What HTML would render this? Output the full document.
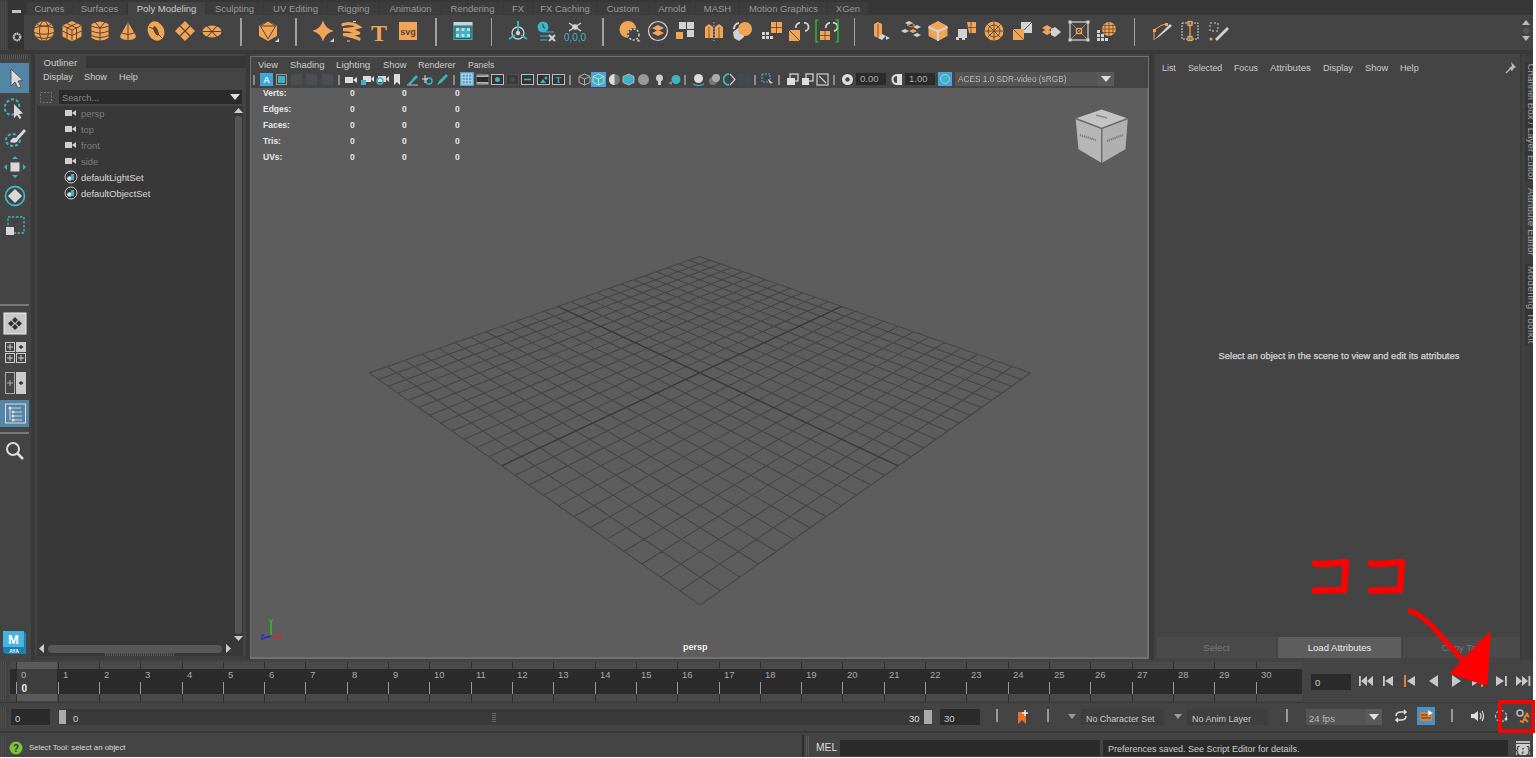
<!DOCTYPE html><html><head><meta charset="utf-8"><style>
html,body{margin:0;padding:0;background:#fff;}
#app{position:absolute;left:0;top:0;width:1533px;height:757px;background:#444;overflow:hidden;font-family:"Liberation Sans",sans-serif;}
#app div,#app span,#app svg{position:absolute;}
.t{white-space:pre;line-height:12px;}
</style></head><body><div id="app">
<div style="left:0px;top:0px;width:1533px;height:15px;background:#373737;"></div>
<div style="left:0px;top:0px;width:8px;height:51px;background:#414141;"></div>
<div style="left:8px;top:0px;width:16px;height:51px;background:#353535;"></div>
<div style="left:24px;top:15px;width:1509px;height:36px;background:#444;"></div>
<div style="left:0px;top:50px;width:1533px;height:4px;background:#393939;"></div>
<div style="left:27px;top:2px;width:45px;height:13px;background:#3d3d3d;"></div>
<span class="t" style="left:27px;top:3px;width:45px;text-align:center;color:#999;font-size:9.5px;">Curves</span>
<div style="left:73px;top:2px;width:53px;height:13px;background:#3d3d3d;"></div>
<span class="t" style="left:73px;top:3px;width:53px;text-align:center;color:#999;font-size:9.5px;">Surfaces</span>
<div style="left:128px;top:2px;width:77px;height:13px;background:#444;"></div>
<span class="t" style="left:128px;top:3px;width:77px;text-align:center;color:#ccc;font-size:9.5px;">Poly Modeling</span>
<div style="left:206px;top:2px;width:57px;height:13px;background:#3d3d3d;"></div>
<span class="t" style="left:206px;top:3px;width:57px;text-align:center;color:#999;font-size:9.5px;">Sculpting</span>
<div style="left:264px;top:2px;width:63px;height:13px;background:#3d3d3d;"></div>
<span class="t" style="left:264px;top:3px;width:63px;text-align:center;color:#999;font-size:9.5px;">UV Editing</span>
<div style="left:328px;top:2px;width:51px;height:13px;background:#3d3d3d;"></div>
<span class="t" style="left:328px;top:3px;width:51px;text-align:center;color:#999;font-size:9.5px;">Rigging</span>
<div style="left:380px;top:2px;width:61px;height:13px;background:#3d3d3d;"></div>
<span class="t" style="left:380px;top:3px;width:61px;text-align:center;color:#999;font-size:9.5px;">Animation</span>
<div style="left:442px;top:2px;width:61px;height:13px;background:#3d3d3d;"></div>
<span class="t" style="left:442px;top:3px;width:61px;text-align:center;color:#999;font-size:9.5px;">Rendering</span>
<div style="left:504px;top:2px;width:28px;height:13px;background:#3d3d3d;"></div>
<span class="t" style="left:504px;top:3px;width:28px;text-align:center;color:#999;font-size:9.5px;">FX</span>
<div style="left:533px;top:2px;width:64px;height:13px;background:#3d3d3d;"></div>
<span class="t" style="left:533px;top:3px;width:64px;text-align:center;color:#999;font-size:9.5px;">FX Caching</span>
<div style="left:598px;top:2px;width:50px;height:13px;background:#3d3d3d;"></div>
<span class="t" style="left:598px;top:3px;width:50px;text-align:center;color:#999;font-size:9.5px;">Custom</span>
<div style="left:649px;top:2px;width:46px;height:13px;background:#3d3d3d;"></div>
<span class="t" style="left:649px;top:3px;width:46px;text-align:center;color:#999;font-size:9.5px;">Arnold</span>
<div style="left:696px;top:2px;width:43px;height:13px;background:#3d3d3d;"></div>
<span class="t" style="left:696px;top:3px;width:43px;text-align:center;color:#999;font-size:9.5px;">MASH</span>
<div style="left:740px;top:2px;width:87px;height:13px;background:#3d3d3d;"></div>
<span class="t" style="left:740px;top:3px;width:87px;text-align:center;color:#999;font-size:9.5px;">Motion Graphics</span>
<div style="left:828px;top:2px;width:40px;height:13px;background:#3d3d3d;"></div>
<span class="t" style="left:828px;top:3px;width:40px;text-align:center;color:#999;font-size:9.5px;">XGen</span>
<svg style="left:32.0px;top:19.0px" width="24" height="24" viewBox="0 0 24 24"><circle cx="12" cy="12" r="10" fill="#f0a458"/><g stroke="#5b432e" stroke-width="1" fill="none"><ellipse cx="12" cy="12" rx="4.5" ry="10"/><path d="M2.5 9 Q12 5 21.5 9M2 13.5 Q12 17 22 13.5M4 18 Q12 21 20 18M5 5.5 Q12 9 19 5.5"/></g></svg>
<svg style="left:60.0px;top:19.0px" width="24" height="24" viewBox="0 0 24 24"><path d="M12 2 L21.5 6.5 L21.5 17.5 L12 22.5 L2.5 17.5 L2.5 6.5Z" fill="#f0a458"/><g stroke="#5b432e" stroke-width="1" fill="none"><path d="M2.5 6.5 L12 11 L21.5 6.5M12 11 L12 22.5M7 4.5 L16.5 9M16.5 4.5 L7 9M2.5 12 L12 16.5 L21.5 12M7 9 L7 20M16.5 9 L16.5 20"/></g></svg>
<svg style="left:88.0px;top:19.0px" width="24" height="24" viewBox="0 0 24 24"><path d="M3.5 5 Q12 0 20.5 5 L20.5 19 Q12 24 3.5 19Z" fill="#f0a458"/><g stroke="#5b432e" stroke-width="1" fill="none"><path d="M3.5 7 Q12 11 20.5 7M3.5 12 Q12 16 20.5 12M3.5 16.5 Q12 20.5 20.5 16.5M12 9 L12 22M7 3 L12 9 L17 3"/></g></svg>
<svg style="left:116.0px;top:19.0px" width="24" height="24" viewBox="0 0 24 24"><path d="M12 3 L20 17 Q20 21 12 21 Q4 21 4 17Z" fill="#f0a458"/><g stroke="#5b432e" stroke-width="1" fill="none"><path d="M12 3 L12 21M6 14 Q12 17 18 14"/></g></svg>
<svg style="left:144.0px;top:19.0px" width="24" height="24" viewBox="0 0 24 24"><ellipse cx="12" cy="12" rx="8" ry="10" fill="#f0a458" transform="rotate(-25 12 12)"/><ellipse cx="12" cy="12" rx="2" ry="5" fill="#5b432e" transform="rotate(-25 12 12)"/><path d="M5 8 L10 10M14 15 L18 19" stroke="#5b432e" stroke-width="1"/></svg>
<svg style="left:173.0px;top:19.0px" width="24" height="24" viewBox="0 0 24 24"><path d="M12 2 L22 12 L12 22 L2 12Z" fill="#f0a458"/><path d="M7 7 L17 17M17 7 L7 17" stroke="#5b432e" stroke-width="1.2"/></svg>
<svg style="left:200.0px;top:19.0px" width="24" height="24" viewBox="0 0 24 24"><ellipse cx="12" cy="12.5" rx="9.5" ry="6" fill="#f0a458"/><path d="M2.5 12.5 L21.5 12.5M7 7 L17 18M17 7 L7 18" stroke="#5b432e" stroke-width="1.1"/></svg>
<svg style="left:256.0px;top:19.0px" width="24" height="24" viewBox="0 0 24 24"><path d="M12 2 L21 7 L21 17 L12 22 L3 17 L3 7Z" fill="#f0a458"/><path d="M4.5 7 L19.5 7 L12 20Z M12 2 L4.5 7 M12 2 L19.5 7" stroke="#5b432e" stroke-width="1" fill="none"/><path d="M23 19 L23 23 L19 23Z" fill="#d2d2d2"/></svg>
<svg style="left:311.0px;top:19.0px" width="24" height="24" viewBox="0 0 24 24"><path d="M12 1.5 Q14.3 9.7 22.5 12 Q14.3 14.3 12 22.5 Q9.7 14.3 1.5 12 Q9.7 9.7 12 1.5Z" fill="#f0a458"/><path d="M23 19 L23 23 L19 23Z" fill="#d2d2d2"/></svg>
<svg style="left:339.0px;top:19.0px" width="24" height="24" viewBox="0 0 24 24"><g stroke="#f0a458" stroke-width="3.2" fill="none" stroke-linecap="round" stroke-dasharray="4 1"><path d="M4 5.5 Q13 3 20 8 Q12 10.5 4 10.5 Q13 11 20 14 Q12 16 4 15.5 Q13 17 20 20"/></g><path d="M14 2.5 L17 2.5 M8 22 L11 22" stroke="#d2d2d2" stroke-width="1.2"/></svg>
<svg style="left:367.0px;top:19.0px" width="24" height="24" viewBox="0 0 24 24"><text x="12" y="21.5" text-anchor="middle" font-family="Liberation Serif" font-weight="bold" font-size="24" fill="#f0a458">T</text></svg>
<svg style="left:395.5px;top:19.0px" width="24" height="24" viewBox="0 0 24 24"><rect x="3" y="3" width="18" height="18" fill="#f0a458"/><text x="12" y="15.5" text-anchor="middle" font-family="Liberation Sans" font-weight="bold" font-size="9" fill="#5b432e">svg</text></svg>
<svg style="left:450.5px;top:19.0px" width="24" height="24" viewBox="0 0 24 24"><rect x="2.5" y="3" width="19" height="4" fill="#d2d2d2"/><rect x="2.5" y="6" width="19" height="15" fill="#3cb4c3"/><g fill="#d2d2d2"><rect x="5" y="9" width="3" height="3"/><rect x="10.5" y="9" width="3" height="3"/><rect x="16" y="9" width="3" height="3"/><rect x="5" y="15" width="3" height="3"/><rect x="10.5" y="15" width="3" height="3"/><rect x="16" y="15" width="3" height="3"/></g><rect x="4" y="8" width="16" height="11.5" fill="none" stroke="#3a3a3a" stroke-width="0.8"/></svg>
<svg style="left:506.0px;top:19.0px" width="24" height="24" viewBox="0 0 24 24"><circle cx="12" cy="14" r="6" fill="none" stroke="#d2d2d2" stroke-width="1.3"/><circle cx="12" cy="14" r="2.2" fill="#d2d2d2"/><path d="M12 2 L12 12 M3 20 L9 16 M21 20 L15 16" stroke="#3cb4c3" stroke-width="2"/></svg>
<svg style="left:534.5px;top:19.0px" width="24" height="24" viewBox="0 0 24 24"><circle cx="8" cy="8" r="5.5" fill="#3cb4c3"/><path d="M8 5 L8 8 L10 9" stroke="#3a3a3a" stroke-width="1" fill="none"/><path d="M10 13 L19 13 M5 17 L14 17 M5 21 L12 21" stroke="#3cb4c3" stroke-width="1.2"/><path d="M14 16 L20 22 M20 16 L14 22" stroke="#d2d2d2" stroke-width="2"/></svg>
<svg style="left:562.5px;top:19.0px" width="24" height="24" viewBox="0 0 24 24"><g fill="#d2d2d2"><circle cx="12" cy="8" r="2.8"/><path d="M6 4 L18 12 M18 4 L6 12" stroke="#d2d2d2" stroke-width="1.5"/></g><text x="12" y="22" text-anchor="middle" font-family="Liberation Sans" font-size="10" fill="#3cb4c3">0,0,0</text></svg>
<svg style="left:618.0px;top:19.0px" width="24" height="24" viewBox="0 0 24 24"><circle cx="10" cy="10.5" r="8.5" fill="#f0a458"/><circle cx="15.5" cy="15.5" r="6.5" fill="#444"/><circle cx="15.5" cy="15.5" r="5.5" fill="none" stroke="#d2d2d2" stroke-width="1.4" stroke-dasharray="2 1.6"/><path d="M20 20 L22.5 22.5 L19 22.5Z" fill="#d2d2d2"/></svg>
<svg style="left:645.5px;top:19.0px" width="24" height="24" viewBox="0 0 24 24"><circle cx="12" cy="12" r="9.5" fill="none" stroke="#d2d2d2" stroke-width="1.2"/><path d="M6 9 L12 6 L18 9 L12 12Z M6 14 L12 11 L18 14 L12 17Z" fill="#f0a458"/></svg>
<svg style="left:673.0px;top:19.0px" width="24" height="24" viewBox="0 0 24 24"><rect x="6" y="3" width="7" height="7" fill="#d2d2d2"/><rect x="14" y="3" width="7" height="7" fill="#d2d2d2"/><rect x="14" y="11" width="7" height="7" fill="#d2d2d2"/><rect x="3" y="13" width="7" height="7" fill="#f0a458"/></svg>
<svg style="left:702.0px;top:19.0px" width="24" height="24" viewBox="0 0 24 24"><path d="M3 8 L7 5 L11 8 L11 19 L3 19Z M13 8 L17 5 L21 8 L21 19 L13 19Z" fill="#f0a458"/><path d="M7 8 L7 19 M17 8 L17 19" stroke="#5b432e" stroke-width="0.8"/><path d="M12 3 L12 22" stroke="#d2d2d2" stroke-width="0.8" stroke-dasharray="1.5 1.5"/></svg>
<svg style="left:729.5px;top:19.0px" width="24" height="24" viewBox="0 0 24 24"><path d="M3 13 L8 9 L14 11 L14 18 L9 22 L4 19Z" fill="#d2d2d2"/><circle cx="15" cy="10" r="7" fill="#f0a458"/><path d="M4 10 A6 6 0 0 1 9 4" stroke="#d2d2d2" stroke-width="2" fill="none"/></svg>
<svg style="left:760.0px;top:19.0px" width="24" height="24" viewBox="0 0 24 24"><g fill="#d2d2d2"><rect x="2" y="13" width="3" height="3"/><rect x="6" y="13" width="3" height="3"/><rect x="2" y="17" width="3" height="3"/><rect x="6" y="17" width="3" height="3"/><rect x="10" y="17" width="3" height="3"/></g><rect x="11" y="3" width="11" height="11" fill="#f0a458"/><path d="M16.5 3 L16.5 14 M11 8.5 L22 8.5" stroke="#5b432e" stroke-width="0.8"/></svg>
<svg style="left:786.0px;top:19.0px" width="24" height="24" viewBox="0 0 24 24"><path d="M3 11 L14 22 L3 22Z" fill="#f0a458"/><path d="M3 11 L14 22 L14 11 L3 11" fill="#f0a458"/><path d="M3 11 L14 22" stroke="#5b432e" stroke-width="0.9"/><path d="M10 9 A4 4 0 0 1 14 4 M18 4 A4 4 0 0 1 19 12" stroke="#d2d2d2" stroke-width="1.8" fill="none"/></svg>
<svg style="left:814.5px;top:19.0px" width="24" height="24" viewBox="0 0 24 24"><rect x="5" y="12" width="10" height="9" fill="#f0a458"/><path d="M10 12 L10 21 M5 16.5 L15 16.5" stroke="#5b432e" stroke-width="0.8"/><path d="M11 9 A4 4 0 0 1 15 4 M18 4 A4 4 0 0 1 19 12" stroke="#d2d2d2" stroke-width="1.8" fill="none"/><path d="M3.5 1 L1 1 L1 23 L3.5 23 M20.5 1 L23 1 L23 23 L20.5 23" stroke="#27d327" stroke-width="1.2" fill="none"/></svg>
<svg style="left:868.5px;top:19.0px" width="24" height="24" viewBox="0 0 24 24"><path d="M5 5 L9 3 L13 5 L13 17 L9 19 L5 17Z" fill="#f0a458"/><path d="M9 5 L9 19" stroke="#5b432e" stroke-width="0.8"/><path d="M13 15 L17 17 L13 21 L9 19Z M17 17 L21 19 L17 21" fill="#d2d2d2"/></svg>
<svg style="left:898.5px;top:19.0px" width="24" height="24" viewBox="0 0 24 24"><path d="M6 4 L10 2 L14 4 L10 6Z M14 8 L18 6 L22 8 L18 10Z M2 12 L6 10 L10 12 L6 14Z M14 16 L18 14 L22 16 L18 18Z" fill="#d2d2d2"/><path d="M10 12 L14 10 L18 12 L14 14Z" fill="#f0a458"/><path d="M8 6 L12 4 L16 6 L12 8Z" fill="none" stroke="#f0a458" stroke-width="0.7"/></svg>
<svg style="left:926.0px;top:19.0px" width="24" height="24" viewBox="0 0 24 24"><path d="M12 2 L21.5 7 L21.5 17 L12 22 L2.5 17 L2.5 7Z" fill="#f0a458"/><path d="M2.5 8 L12 12.5 L21.5 8 M12 12.5 L12 22" stroke="#d2d2d2" stroke-width="2" fill="none"/></svg>
<svg style="left:953.5px;top:19.0px" width="24" height="24" viewBox="0 0 24 24"><path d="M13 3 L22 3 L22 14 L15 14Z" fill="#f0a458"/><path d="M17 3 L17 14 M13 8.5 L22 8.5" stroke="#5b432e" stroke-width="0.8"/><path d="M4 10 L13 10 L13 19 L4 19Z" fill="#d2d2d2"/><rect x="2" y="18" width="3" height="3" fill="#d2d2d2"/><rect x="8" y="18" width="3" height="3" fill="#d2d2d2"/></svg>
<svg style="left:982.0px;top:19.0px" width="24" height="24" viewBox="0 0 24 24"><circle cx="12" cy="12" r="9.5" fill="#f0a458"/><g stroke="#5b432e" stroke-width="0.9" fill="none"><circle cx="12" cy="12" r="6"/><path d="M12 2.5 L12 21.5 M2.5 12 L21.5 12 M5.3 5.3 L18.7 18.7 M18.7 5.3 L5.3 18.7"/></g></svg>
<svg style="left:1009.5px;top:19.0px" width="24" height="24" viewBox="0 0 24 24"><rect x="11" y="3" width="11" height="11" fill="#d2d2d2"/><path d="M11 14 L22 3" stroke="#3a3a3a" stroke-width="0.8"/><rect x="3" y="10" width="11" height="11" fill="#f0a458"/><path d="M3 10 L14 21" stroke="#5b432e" stroke-width="0.8"/></svg>
<svg style="left:1038.5px;top:19.0px" width="24" height="24" viewBox="0 0 24 24"><path d="M3 9 L8 6 L13 9 L8 12Z M3 13 L8 10 L13 13 L8 16Z" fill="#f0a458"/><path d="M12 10 L16 8 L22 13 L16 18 L12 16Z" fill="#d2d2d2"/></svg>
<svg style="left:1067.0px;top:19.0px" width="24" height="24" viewBox="0 0 24 24"><rect x="3" y="3" width="18" height="18" fill="none" stroke="#d2d2d2" stroke-width="1.2"/><path d="M4 4 L20 20 M20 4 L4 20" stroke="#f0a458" stroke-width="1" opacity="0.6"/><rect x="9.5" y="9.5" width="5" height="5" fill="none" stroke="#f0a458" stroke-width="1.3"/><g fill="#d2d2d2"><rect x="1.5" y="1.5" width="3" height="3"/><rect x="19.5" y="1.5" width="3" height="3"/><rect x="1.5" y="19.5" width="3" height="3"/><rect x="19.5" y="19.5" width="3" height="3"/></g></svg>
<svg style="left:1094.5px;top:19.0px" width="24" height="24" viewBox="0 0 24 24"><g fill="#d2d2d2"><rect x="2" y="11" width="3" height="3"/><rect x="2" y="15" width="3" height="3"/><rect x="2" y="19" width="3" height="3"/><rect x="6" y="15" width="3" height="3"/><rect x="6" y="19" width="3" height="3"/><rect x="10" y="19" width="3" height="3"/></g><circle cx="14" cy="10" r="7" fill="#f0a458"/><path d="M14 3 L14 17 M7 10 L21 10 M10 4.5 L10 15.5 M18 4.5 L18 15.5 M8 6.5 L20 6.5 M8 13.5 L20 13.5" stroke="#5b432e" stroke-width="0.7"/></svg>
<svg style="left:1150.0px;top:19.0px" width="24" height="24" viewBox="0 0 24 24"><path d="M4 21 L20 5 L22 7 L10 17Z" fill="#d2d2d2"/><path d="M4 21 L4 11 L12 6 L16 5" stroke="#f0a458" stroke-width="1" fill="none"/><rect x="3" y="10" width="3" height="3" fill="#f0a458"/><rect x="15" y="4" width="3" height="3" fill="#f0a458"/></svg>
<svg style="left:1177.5px;top:19.0px" width="24" height="24" viewBox="0 0 24 24"><rect x="4" y="4" width="16" height="16" fill="none" stroke="#d2d2d2" stroke-width="1" stroke-dasharray="2 1"/><path d="M12 5 L12 19" stroke="#f0a458" stroke-width="1.2"/><rect x="10" y="2.5" width="4" height="4" fill="none" stroke="#f0a458" stroke-width="1.2"/><rect x="10" y="17.5" width="4" height="4" fill="none" stroke="#f0a458" stroke-width="1.2"/></svg>
<svg style="left:1206.0px;top:19.0px" width="24" height="24" viewBox="0 0 24 24"><rect x="4" y="4" width="8" height="8" fill="none" stroke="#d2d2d2" stroke-width="1" stroke-dasharray="2 2"/><path d="M9 20 L21 8 L23 10 L11 22Z" fill="#d2d2d2"/><circle cx="5" cy="20" r="1.5" fill="#f0a458"/></svg>
<div style="left:240.0px;top:18px;width:1.5px;height:28px;background:#a0a0a0;"></div>
<div style="left:295.0px;top:18px;width:1.5px;height:28px;background:#a0a0a0;"></div>
<div style="left:435.0px;top:18px;width:1.5px;height:28px;background:#a0a0a0;"></div>
<div style="left:490.5px;top:18px;width:1.5px;height:28px;background:#a0a0a0;"></div>
<div style="left:602.0px;top:18px;width:1.5px;height:28px;background:#a0a0a0;"></div>
<div style="left:853.5px;top:18px;width:1.5px;height:28px;background:#a0a0a0;"></div>
<div style="left:1133.5px;top:18px;width:1.5px;height:28px;background:#a0a0a0;"></div>
<div style="left:12px;top:9.5px;width:9px;height:3.5px;background:#c4c4c4;"></div>
<svg style="left:10.5px;top:31.0px" width="12" height="12" viewBox="0 0 12 12"><circle cx="6" cy="6" r="3.3" fill="none" stroke="#c8c8c8" stroke-width="2.2" stroke-dasharray="1.6 0.5"/></svg>
<div style="left:1px;top:1px;width:6px;height:49px;background:repeating-linear-gradient(90deg,#4c4c4c 0 1px,#3f3f3f 1px 2px);"></div>
<svg style="left:1520.5px;top:19.0px" width="10" height="24" viewBox="0 0 10 24"><path d="M1 6 L5 1 L9 6Z" fill="#bbb"/><circle cx="5" cy="12" r="3" fill="#555"/><path d="M1 17 L5 22 L9 17Z" fill="#bbb"/></svg>
<div style="left:0px;top:54px;width:31px;height:679px;background:#444;"></div>
<div style="left:31px;top:54px;width:4px;height:607px;background:#393939;"></div>
<div style="left:1px;top:55px;width:28px;height:4px;background:repeating-linear-gradient(90deg,#5a5a5a 0 1px,#3a3a3a 1px 2px);"></div>
<div style="left:0px;top:63px;width:29px;height:30px;background:#5285a6;"></div>
<svg style="left:3.0px;top:66.0px" width="24" height="24" viewBox="0 0 24 24"><path d="M8 3 L8 20 L12 16 L15 22 L18 20.5 L15 15 L20 14.5Z" fill="#d8d8d8" stroke="#444" stroke-width="0.8"/></svg>
<svg style="left:3.0px;top:95.0px" width="24" height="24" viewBox="0 0 24 24"><ellipse cx="9" cy="12" rx="7" ry="8" fill="none" stroke="#3cb4c3" stroke-width="2" stroke-dasharray="3 2" transform="rotate(30 9 12)"/><path d="M11 9 L11 23 L14 20 L16.5 24 L18.5 23 L16 19 L20 18.5Z" fill="#d8d8d8"/></svg>
<svg style="left:3.0px;top:125.0px" width="24" height="24" viewBox="0 0 24 24"><ellipse cx="10" cy="15" rx="7" ry="6" fill="none" stroke="#3cb4c3" stroke-width="2" stroke-dasharray="3 2"/><path d="M7 17 Q9 12 13 13 L21 4 L23 6 L15 15 Q14 19 7 17Z" fill="#d8d8d8"/></svg>
<svg style="left:3.0px;top:155.0px" width="24" height="24" viewBox="0 0 24 24"><rect x="7.5" y="7.5" width="9" height="9" fill="#d8d8d8"/><path d="M12 1 L15 4 L9 4Z M12 23 L15 20 L9 20Z M1 12 L4 9 L4 15Z M23 12 L20 9 L20 15Z" fill="#3cb4c3"/></svg>
<svg style="left:3.0px;top:184.0px" width="24" height="24" viewBox="0 0 24 24"><circle cx="12" cy="12" r="9.5" fill="none" stroke="#3cb4c3" stroke-width="1.8"/><rect x="7" y="7" width="10" height="10" fill="#d8d8d8" transform="rotate(45 12 12)"/></svg>
<svg style="left:3.0px;top:214.0px" width="24" height="24" viewBox="0 0 24 24"><rect x="5" y="3" width="16" height="16" fill="none" stroke="#3cb4c3" stroke-width="1.3" stroke-dasharray="2.5 1.5"/><rect x="3" y="13" width="8" height="8" fill="#d8d8d8"/></svg>
<div style="left:0px;top:304px;width:29px;height:1.5px;background:#777;"></div>
<svg style="left:2.5px;top:311.5px" width="24" height="24" viewBox="0 0 24 24"><rect x="1" y="1" width="22" height="21" fill="#c8c8c8" stroke="#eee" stroke-width="1"/><path d="M12 5 L15 8 L12 11 L9 8Z M12 12 L15 15 L12 18 L9 15Z M5 11.5 L8 8.5 L11 11.5 L8 14.5Z M19 11.5 L16 8.5 L13 11.5 L16 14.5Z" fill="#333"/></svg>
<svg style="left:2.5px;top:341.0px" width="24" height="24" viewBox="0 0 24 24"><g fill="none" stroke="#ccc" stroke-width="1"><rect x="2.5" y="1.5" width="9" height="9"/><rect x="2.5" y="12.5" width="9" height="9"/><rect x="13.5" y="12.5" width="9" height="9"/></g><rect x="13" y="1" width="10" height="10" fill="#ccc"/><path d="M7 3 L7 9 M4 6 L10 6 M7 14 L7 20 M4 17 L10 17 M18 14 L18 20 M15 17 L21 17" stroke="#ccc" stroke-width="1"/><path d="M18 4 L20.5 6 L18 8 L15.5 6Z" fill="#333"/></svg>
<svg style="left:2.5px;top:371.0px" width="24" height="24" viewBox="0 0 24 24"><rect x="2.5" y="1.5" width="9" height="21" fill="none" stroke="#aaa" stroke-width="1"/><path d="M7 9 L7 15 M4 12 L10 12" stroke="#aaa" stroke-width="1"/><rect x="13" y="1" width="10" height="22" fill="#ccc"/><path d="M18 10 L20.5 12 L18 14 L15.5 12Z" fill="#333"/></svg>
<div style="left:0px;top:400px;width:29px;height:27px;background:#5285a6;"></div>
<svg style="left:2.5px;top:401.5px" width="24" height="24" viewBox="0 0 24 24"><rect x="2.5" y="2" width="20" height="19" fill="none" stroke="#ddd" stroke-width="1"/><g fill="#ddd"><circle cx="7" cy="6" r="1.5"/><circle cx="10" cy="10" r="1.5"/><circle cx="10" cy="14" r="1.5"/><circle cx="10" cy="18" r="1.5"/></g><path d="M8 6 L18 6 M11 10 L19 10 M11 14 L19 14 M11 18 L19 18 M7 7 L7 18" stroke="#ddd" stroke-width="0.9"/></svg>
<div style="left:0px;top:432px;width:29px;height:1.5px;background:#777;"></div>
<svg style="left:2.5px;top:439.0px" width="24" height="24" viewBox="0 0 24 24"><circle cx="10" cy="10" r="6" fill="none" stroke="#ddd" stroke-width="2"/><path d="M14.5 14.5 L20 20" stroke="#ddd" stroke-width="2.5"/></svg>
<svg style="left:2.0px;top:629.0px" width="26" height="27" viewBox="0 0 26 27"><path d="M1 2 L21 2 L24 4 L24 25 L4 25 L1 23Z" fill="#1f7fb0"/><rect x="1" y="2" width="21" height="16" fill="#47b4e0"/><text x="11.5" y="15" text-anchor="middle" font-family="Liberation Sans" font-weight="bold" font-size="13" fill="#fff">M</text><text x="12" y="23.5" text-anchor="middle" font-family="Liberation Sans" font-weight="bold" font-size="5" fill="#fff">AYA</text></svg>
<div style="left:35px;top:54px;width:211px;height:607px;background:#444;"></div>
<div style="left:86px;top:55.5px;width:160px;height:12.5px;background:#363636;"></div>
<span class="t" style="left:43.5px;top:56.5px;color:#ccc;font-size:9.6px;">Outliner</span>
<span class="t" style="left:43px;top:71px;color:#ccc;font-size:9.1px;">Display</span>
<span class="t" style="left:84px;top:71px;color:#ccc;font-size:9.2px;">Show</span>
<span class="t" style="left:119px;top:71px;color:#ccc;font-size:9.2px;">Help</span>
<div style="left:59px;top:90px;width:183px;height:14px;background:#2b2b2b;"></div>
<span class="t" style="left:62px;top:92px;color:#888;font-size:9.3px;">Search...</span>
<div style="left:37px;top:106px;width:206px;height:550px;background:#383838;"></div>
<div style="left:35px;top:656px;width:211px;height:4px;background:#3e3e3e;"></div>
<svg style="left:38.5px;top:90.5px" width="14" height="13" viewBox="0 0 14 13"><g fill="none" stroke="#777" stroke-width="1" stroke-dasharray="2 1.5"><rect x="1.5" y="1.5" width="11" height="10"/></g></svg>
<svg style="left:230px;top:94px" width="10" height="6" viewBox="0 0 10 6"><path d="M0 0 L10 0 L5 6Z" fill="#ddd"/></svg>
<svg style="left:65px;top:109px" width="12" height="8" viewBox="0 0 12 8"><rect x="0" y="1" width="7" height="6" fill="#d0d0d0"/><path d="M7 4 L11 1 L11 7Z" fill="#d0d0d0"/></svg>
<span class="t" style="left:81px;top:108px;color:#7d7d7d;font-size:9.4px;">persp</span>
<svg style="left:65px;top:125px" width="12" height="8" viewBox="0 0 12 8"><rect x="0" y="1" width="7" height="6" fill="#d0d0d0"/><path d="M7 4 L11 1 L11 7Z" fill="#d0d0d0"/></svg>
<span class="t" style="left:81px;top:124px;color:#7d7d7d;font-size:9.4px;">top</span>
<svg style="left:65px;top:141px" width="12" height="8" viewBox="0 0 12 8"><rect x="0" y="1" width="7" height="6" fill="#d0d0d0"/><path d="M7 4 L11 1 L11 7Z" fill="#d0d0d0"/></svg>
<span class="t" style="left:81px;top:140px;color:#7d7d7d;font-size:9.4px;">front</span>
<svg style="left:65px;top:157px" width="12" height="8" viewBox="0 0 12 8"><rect x="0" y="1" width="7" height="6" fill="#d0d0d0"/><path d="M7 4 L11 1 L11 7Z" fill="#d0d0d0"/></svg>
<span class="t" style="left:81px;top:156px;color:#7d7d7d;font-size:9.4px;">side</span>
<svg style="left:64px;top:170px" width="14" height="14" viewBox="0 0 14 14"><circle cx="7" cy="7" r="6" fill="none" stroke="#ccc" stroke-width="1"/><circle cx="5.5" cy="8.5" r="2.3" fill="#ddd"/><path d="M7 4 L10 4 L10 10 L7 10Z" fill="#3cb4c3"/></svg>
<span class="t" style="left:81px;top:172px;color:#d8d8d8;font-size:9.4px;">defaultLightSet</span>
<svg style="left:64px;top:186px" width="14" height="14" viewBox="0 0 14 14"><circle cx="7" cy="7" r="6" fill="none" stroke="#ccc" stroke-width="1"/><circle cx="5.5" cy="8.5" r="2.3" fill="#ddd"/><path d="M7 4 L10 4 L10 10 L7 10Z" fill="#3cb4c3"/></svg>
<span class="t" style="left:81px;top:188px;color:#d8d8d8;font-size:9.4px;">defaultObjectSet</span>
<div style="left:235px;top:116px;width:7px;height:518px;background:#555;border-radius:3px;"></div>
<svg style="left:233px;top:107px" width="11" height="7" viewBox="0 0 11 7"><path d="M1 6 L5.5 1 L10 6Z" fill="#ccc"/></svg>
<svg style="left:233px;top:635px" width="11" height="7" viewBox="0 0 11 7"><path d="M1 1 L5.5 6 L10 1Z" fill="#ccc"/></svg>
<div style="left:48px;top:645px;width:174px;height:8px;background:#585858;border-radius:4px;"></div>
<div style="left:105px;top:653px;width:70px;height:3px;background:repeating-linear-gradient(90deg,#5a5a5a 0 1px,transparent 1px 2px);"></div>
<svg style="left:38px;top:643px" width="7" height="11" viewBox="0 0 7 11"><path d="M6 1 L1 5.5 L6 10Z" fill="#ccc"/></svg>
<svg style="left:225px;top:643px" width="7" height="11" viewBox="0 0 7 11"><path d="M1 1 L6 5.5 L1 10Z" fill="#ccc"/></svg>
<div style="left:246px;top:54px;width:4px;height:607px;background:#393939;"></div>
<div style="left:250px;top:56px;width:899px;height:603px;background:#707070;"></div>
<div style="left:251px;top:57px;width:897px;height:31px;background:#444;"></div>
<div style="left:251px;top:88px;width:896px;height:569px;background:#5d5d5d;"></div>
<span class="t" style="left:258px;top:59px;color:#ccc;font-size:9.3px;">View</span>
<span class="t" style="left:290px;top:59px;color:#ccc;font-size:9.4px;">Shading</span>
<span class="t" style="left:336px;top:59px;color:#ccc;font-size:9.8px;">Lighting</span>
<span class="t" style="left:383px;top:59px;color:#ccc;font-size:9.4px;">Show</span>
<span class="t" style="left:418px;top:59px;color:#ccc;font-size:9px;">Renderer</span>
<span class="t" style="left:468px;top:59px;color:#ccc;font-size:8.6px;">Panels</span>
<svg style="left:251px;top:88px" width="896" height="569" viewBox="0 0 896 569"><path d="M448.60 168.50L118.00 284.90M448.60 168.50L779.60 284.90M459.06 172.18L127.35 291.45M438.15 172.18L770.27 291.45M469.75 175.94L136.97 298.19M427.48 175.94L760.68 298.19M480.67 179.78L146.86 305.12M416.57 179.78L750.81 305.12M491.82 183.70L157.04 312.25M405.44 183.70L740.65 312.25M503.21 187.71L167.53 319.59M394.05 187.71L730.19 319.59M514.86 191.80L178.33 327.16M382.42 191.80L719.41 327.16M526.77 195.99L189.46 334.96M370.52 195.99L708.31 334.96M538.95 200.27L200.94 343.00M358.36 200.27L696.86 343.00M551.41 204.65L212.78 351.29M345.92 204.65L685.05 351.29M564.15 209.14L225.00 359.86M333.19 209.13L672.85 359.85M577.20 213.72L237.62 368.69M320.16 213.72L660.26 368.69M604.22 223.23L264.14 387.27M293.16 223.23L633.81 387.27M618.23 228.15L278.08 397.03M279.17 228.15L619.91 397.03M632.58 233.20L292.51 407.14M264.84 233.20L605.52 407.14M647.29 238.37L307.44 417.60M250.15 238.37L590.61 417.60M662.37 243.67L322.92 428.44M235.09 243.67L575.17 428.44M677.83 249.11L338.97 439.68M219.64 249.11L559.17 439.68M693.70 254.69L355.62 451.35M203.80 254.69L542.56 451.35M709.98 260.42L372.90 463.46M187.54 260.42L525.31 463.46M726.69 266.29L390.86 476.04M170.85 266.29L507.40 476.04M743.85 272.33L409.54 489.12M153.70 272.33L488.77 489.12M761.48 278.53L428.97 502.73M136.10 278.53L469.39 502.73M779.60 284.90L449.20 516.90M118.00 284.90L449.20 516.90" stroke="#454545" stroke-width="1.05" fill="none"/><path d="M590.55 218.42L250.66 377.83M306.82 218.42L647.26 377.83" stroke="#383838" stroke-width="1.35" fill="none"/></svg>
<svg style="left:248.0px;top:72.5px" width="13" height="13" viewBox="0 0 13 13"><rect x="5" y="2" width="2" height="10" fill="#888"/></svg>
<svg style="left:259.5px;top:72.5px" width="13" height="13" viewBox="0 0 13 13"><rect x="0" y="0" width="13" height="13" fill="#3fa6da"/><text x="6.5" y="10" text-anchor="middle" font-family="Liberation Sans" font-weight="bold" font-size="9" fill="#eee">A</text></svg>
<svg style="left:275.0px;top:72.5px" width="13" height="13" viewBox="0 0 13 13"><rect x="1.5" y="1.5" width="10" height="10" fill="none" stroke="#999" stroke-width="1"/><rect x="3" y="3" width="7" height="7" fill="#3cb4c3"/></svg>
<svg style="left:290.0px;top:72.5px" width="13" height="13" viewBox="0 0 13 13"><rect x="1" y="1" width="11" height="11" fill="#4a4f55"/></svg>
<svg style="left:305.0px;top:72.5px" width="13" height="13" viewBox="0 0 13 13"><rect x="1" y="1" width="11" height="11" fill="#4a4f55"/></svg>
<svg style="left:320.5px;top:72.5px" width="13" height="13" viewBox="0 0 13 13"><rect x="1" y="1" width="11" height="11" fill="#4a4f55"/></svg>
<svg style="left:332.5px;top:72.5px" width="13" height="13" viewBox="0 0 13 13"><rect x="5" y="2" width="2" height="10" fill="#888"/></svg>
<svg style="left:345.0px;top:72.5px" width="13" height="13" viewBox="0 0 13 13"><rect x="0" y="4" width="8" height="6" fill="#ddd"/><path d="M8 7 L12 4 L12 10Z" fill="#ddd"/></svg>
<svg style="left:360.5px;top:72.5px" width="13" height="13" viewBox="0 0 13 13"><rect x="2" y="3" width="8" height="6" fill="#ddd"/><path d="M10 6 L13 3 L13 9Z" fill="#ddd"/><rect x="0" y="7" width="5" height="5" fill="#3cb4c3"/></svg>
<svg style="left:375.5px;top:72.5px" width="13" height="13" viewBox="0 0 13 13"><rect x="2" y="3" width="8" height="6" fill="#ddd"/><path d="M10 6 L13 3 L13 9Z" fill="#ddd"/><circle cx="4" cy="8" r="3" fill="none" stroke="#3cb4c3" stroke-width="1.5"/></svg>
<svg style="left:391.0px;top:72.5px" width="13" height="13" viewBox="0 0 13 13"><path d="M3 1 L9 1 L9 12 L6 9 L3 12Z" fill="#ddd"/></svg>
<svg style="left:406.0px;top:72.5px" width="13" height="13" viewBox="0 0 13 13"><path d="M2 11 L10 2 L12 4 L4 12Z" fill="#3cb4c3"/><path d="M1 12 L12 12" stroke="#bbb" stroke-width="1"/></svg>
<svg style="left:420.5px;top:72.5px" width="13" height="13" viewBox="0 0 13 13"><circle cx="8" cy="8" r="3" fill="none" stroke="#3cb4c3" stroke-width="1.5"/><path d="M1 6 L7 6 M4 2 L4 10" stroke="#ddd" stroke-width="1"/></svg>
<svg style="left:436.0px;top:72.5px" width="13" height="13" viewBox="0 0 13 13"><path d="M1 12 L3 8 L10 1 L12 3 L5 10Z" fill="#3cb4c3"/></svg>
<svg style="left:447.5px;top:72.5px" width="13" height="13" viewBox="0 0 13 13"><rect x="5" y="2" width="2" height="10" fill="#888"/></svg>
<svg style="left:460.0px;top:72.0px" width="14" height="14" viewBox="0 0 14 14"><rect x="0" y="0" width="14" height="14" fill="#4aa3d6"/><rect x="2" y="2" width="10" height="10" fill="none" stroke="#ddd" stroke-width="1"/><path d="M5.3 2 L5.3 12 M8.6 2 L8.6 12 M2 5.3 L12 5.3 M2 8.6 L12 8.6" stroke="#ddd" stroke-width="0.8"/></svg>
<svg style="left:475.5px;top:72.5px" width="13" height="13" viewBox="0 0 13 13"><rect x="0.5" y="1.5" width="12" height="10" fill="#bbb"/><rect x="0.5" y="4" width="12" height="5" fill="#2a2a2a"/><path d="M1.5 2.5 L11.5 2.5 M1.5 10.5 L11.5 10.5" stroke="#666" stroke-width="1" stroke-dasharray="1 1"/></svg>
<svg style="left:490.5px;top:72.5px" width="13" height="13" viewBox="0 0 13 13"><rect x="0.5" y="1.5" width="12" height="10" fill="#333" stroke="#bbb" stroke-width="1"/><circle cx="6.5" cy="6.5" r="2.5" fill="#3cb4c3"/></svg>
<svg style="left:505.5px;top:72.5px" width="13" height="13" viewBox="0 0 13 13"><rect x="0.5" y="1.5" width="12" height="10" fill="#3a3a3a" stroke="#4e4e4e" stroke-width="1"/><circle cx="6.5" cy="6.5" r="2.5" fill="#4a4a4a"/></svg>
<svg style="left:521.0px;top:72.5px" width="13" height="13" viewBox="0 0 13 13"><rect x="0.5" y="1.5" width="12" height="10" fill="#333" stroke="#bbb" stroke-width="1"/><path d="M3 6.5 L10 6.5" stroke="#3cb4c3" stroke-width="1.5"/></svg>
<svg style="left:536.5px;top:72.5px" width="13" height="13" viewBox="0 0 13 13"><rect x="0.5" y="1.5" width="12" height="10" fill="#333" stroke="#bbb" stroke-width="1"/><path d="M3 10 L6 6 L9 10Z" fill="#3cb4c3"/><circle cx="9" cy="5" r="1.5" fill="#3cb4c3"/></svg>
<svg style="left:551.5px;top:72.5px" width="13" height="13" viewBox="0 0 13 13"><rect x="0.5" y="1.5" width="12" height="10" fill="#333" stroke="#bbb" stroke-width="1"/><text x="6.5" y="10" text-anchor="middle" font-family="Liberation Serif" font-weight="bold" font-size="9" fill="#3cb4c3">T</text></svg>
<svg style="left:563.5px;top:72.5px" width="13" height="13" viewBox="0 0 13 13"><rect x="5" y="2" width="2" height="10" fill="#888"/></svg>
<svg style="left:577.5px;top:72.5px" width="13" height="13" viewBox="0 0 13 13"><path d="M6.5 1 L12 3.5 L12 9.5 L6.5 12 L1 9.5 L1 3.5Z M1 3.5 L6.5 6 L12 3.5 M6.5 6 L6.5 12" fill="none" stroke="#bbb" stroke-width="0.9"/></svg>
<svg style="left:590.5px;top:71.5px" width="15" height="15" viewBox="0 0 15 15"><rect x="0" y="0" width="15" height="15" fill="#4aa3d6"/><path d="M7.5 2 L13 4.5 L13 10.5 L7.5 13 L2 10.5 L2 4.5Z" fill="#3cb4c3" stroke="#ddd" stroke-width="0.8"/><path d="M2 4.5 L7.5 7 L13 4.5 M7.5 7 L7.5 13" stroke="#ddd" stroke-width="0.8" fill="none"/></svg>
<svg style="left:607.5px;top:72.5px" width="13" height="13" viewBox="0 0 13 13"><circle cx="6.5" cy="6.5" r="5.5" fill="#777"/><path d="M6.5 1 A5.5 5.5 0 0 0 6.5 12Z" fill="#ddd"/></svg>
<svg style="left:622.0px;top:72.5px" width="13" height="13" viewBox="0 0 13 13"><path d="M6.5 1 L12 3.5 L12 9.5 L6.5 12 L1 9.5 L1 3.5Z" fill="#3cb4c3" stroke="#bbb" stroke-width="0.9"/></svg>
<svg style="left:637.0px;top:72.5px" width="13" height="13" viewBox="0 0 13 13"><circle cx="6.5" cy="6.5" r="5.5" fill="#999"/></svg>
<svg style="left:652.5px;top:72.5px" width="13" height="13" viewBox="0 0 13 13"><circle cx="6.5" cy="5" r="3.5" fill="#ccc"/><rect x="5" y="8" width="3" height="4" fill="#ccc"/></svg>
<svg style="left:667.5px;top:72.5px" width="13" height="13" viewBox="0 0 13 13"><circle cx="8" cy="6.5" r="4.5" fill="#3cb4c3"/><path d="M0 10 L4 8 L4 12Z" fill="#888"/></svg>
<svg style="left:678.5px;top:72.5px" width="13" height="13" viewBox="0 0 13 13"><rect x="5" y="2" width="2" height="10" fill="#888"/></svg>
<svg style="left:692.0px;top:72.5px" width="13" height="13" viewBox="0 0 13 13"><circle cx="6.5" cy="5.5" r="4.5" fill="#ddd"/><path d="M1 11 Q6.5 14 12 11" stroke="#3cb4c3" stroke-width="1.2" fill="none"/></svg>
<svg style="left:707.5px;top:72.5px" width="13" height="13" viewBox="0 0 13 13"><circle cx="5" cy="8" r="4" fill="#777"/><circle cx="8" cy="5" r="4" fill="#aaa"/></svg>
<svg style="left:722.5px;top:72.5px" width="13" height="13" viewBox="0 0 13 13"><path d="M6 1 A5.5 5.5 0 0 0 6 12" stroke="#3cb4c3" stroke-width="1.8" fill="none"/><path d="M7 1 L12 6.5 L7 12" stroke="#ccc" stroke-width="1.2" fill="none"/></svg>
<svg style="left:737.5px;top:72.5px" width="13" height="13" viewBox="0 0 13 13"><rect x="0" y="0" width="13" height="13" fill="#3f4a50"/></svg>
<svg style="left:748.5px;top:72.5px" width="13" height="13" viewBox="0 0 13 13"><rect x="5" y="2" width="2" height="10" fill="#888"/></svg>
<svg style="left:761.0px;top:72.5px" width="13" height="13" viewBox="0 0 13 13"><rect x="1" y="1" width="8" height="8" fill="none" stroke="#3cb4c3" stroke-width="1" stroke-dasharray="2 1"/><path d="M7 6 L12 10 L9.5 10.5 L11 13 L7 7Z" fill="#ccc"/></svg>
<svg style="left:772.5px;top:72.5px" width="13" height="13" viewBox="0 0 13 13"><rect x="5" y="2" width="2" height="10" fill="#888"/></svg>
<svg style="left:785.5px;top:72.5px" width="13" height="13" viewBox="0 0 13 13"><rect x="4" y="1" width="8" height="7" fill="none" stroke="#ddd" stroke-width="1.2"/><rect x="1" y="5" width="8" height="7" fill="#ddd"/></svg>
<svg style="left:800.5px;top:72.5px" width="13" height="13" viewBox="0 0 13 13"><rect x="5" y="1" width="7" height="7" fill="none" stroke="#ddd" stroke-width="1.2"/><rect x="1" y="5" width="7" height="7" fill="#ddd"/></svg>
<svg style="left:816.0px;top:72.5px" width="13" height="13" viewBox="0 0 13 13"><rect x="1" y="1" width="11" height="11" fill="none" stroke="#ccc" stroke-width="1.2"/><path d="M3 3 L10 10" stroke="#ccc" stroke-width="1.3"/></svg>
<svg style="left:827.5px;top:72.5px" width="13" height="13" viewBox="0 0 13 13"><rect x="5" y="2" width="2" height="10" fill="#888"/></svg>
<svg style="left:841.0px;top:72.5px" width="13" height="13" viewBox="0 0 13 13"><circle cx="6.5" cy="6.5" r="5.5" fill="#ddd"/><circle cx="6.5" cy="6.5" r="2.2" fill="#444"/></svg>
<svg style="left:889.5px;top:72.5px" width="13" height="13" viewBox="0 0 13 13"><path d="M7 1 L12 1 L12 12 L7 12 A5.5 5.5 0 0 1 7 1Z" fill="#ddd"/><path d="M7 3 A3.5 3.5 0 0 0 7 10Z" fill="#444"/></svg>
<div style="left:856px;top:73px;width:30px;height:12px;background:#2b2b2b;"></div>
<span class="t" style="left:860px;top:72.5px;color:#aaa;font-size:9.5px;">0.00</span>
<div style="left:905px;top:73px;width:30px;height:12px;background:#2b2b2b;"></div>
<span class="t" style="left:909px;top:72.5px;color:#aaa;font-size:9.5px;">1.00</span>
<svg style="left:938px;top:72px" width="14" height="14" viewBox="0 0 14 14"><rect x="0" y="0" width="14" height="14" fill="#4aa3d6"/><circle cx="7" cy="7" r="4.5" fill="#3cb4c3" stroke="#ddd" stroke-width="0.6"/></svg>
<div style="left:955px;top:72px;width:159px;height:14px;background:#555;"></div>
<div style="left:1097px;top:72px;width:17px;height:14px;background:#5a5a5a;"></div>
<span class="t" style="left:958px;top:73px;color:#bbb;font-size:9.5px;transform:scaleX(0.87);transform-origin:0 50%;">ACES 1.0 SDR-video (sRGB)</span>
<svg style="left:1101px;top:76px" width="10" height="6" viewBox="0 0 10 6"><path d="M0 0 L10 0 L5 6Z" fill="#ddd"/></svg>
<span class="t" style="left:263px;top:87px;color:#e6e6e6;font-size:8.5px;font-weight:bold;">Verts:</span>
<span class="t" style="left:350px;top:87px;color:#e6e6e6;font-size:8.5px;font-weight:bold;">0</span>
<span class="t" style="left:402px;top:87px;color:#e6e6e6;font-size:8.5px;font-weight:bold;">0</span>
<span class="t" style="left:455px;top:87px;color:#e6e6e6;font-size:8.5px;font-weight:bold;">0</span>
<span class="t" style="left:263px;top:103px;color:#e6e6e6;font-size:8.5px;font-weight:bold;">Edges:</span>
<span class="t" style="left:350px;top:103px;color:#e6e6e6;font-size:8.5px;font-weight:bold;">0</span>
<span class="t" style="left:402px;top:103px;color:#e6e6e6;font-size:8.5px;font-weight:bold;">0</span>
<span class="t" style="left:455px;top:103px;color:#e6e6e6;font-size:8.5px;font-weight:bold;">0</span>
<span class="t" style="left:263px;top:119px;color:#e6e6e6;font-size:8.5px;font-weight:bold;">Faces:</span>
<span class="t" style="left:350px;top:119px;color:#e6e6e6;font-size:8.5px;font-weight:bold;">0</span>
<span class="t" style="left:402px;top:119px;color:#e6e6e6;font-size:8.5px;font-weight:bold;">0</span>
<span class="t" style="left:455px;top:119px;color:#e6e6e6;font-size:8.5px;font-weight:bold;">0</span>
<span class="t" style="left:263px;top:135px;color:#e6e6e6;font-size:8.5px;font-weight:bold;">Tris:</span>
<span class="t" style="left:350px;top:135px;color:#e6e6e6;font-size:8.5px;font-weight:bold;">0</span>
<span class="t" style="left:402px;top:135px;color:#e6e6e6;font-size:8.5px;font-weight:bold;">0</span>
<span class="t" style="left:455px;top:135px;color:#e6e6e6;font-size:8.5px;font-weight:bold;">0</span>
<span class="t" style="left:263px;top:151px;color:#e6e6e6;font-size:8.5px;font-weight:bold;">UVs:</span>
<span class="t" style="left:350px;top:151px;color:#e6e6e6;font-size:8.5px;font-weight:bold;">0</span>
<span class="t" style="left:402px;top:151px;color:#e6e6e6;font-size:8.5px;font-weight:bold;">0</span>
<span class="t" style="left:455px;top:151px;color:#e6e6e6;font-size:8.5px;font-weight:bold;">0</span>
<svg style="left:1070px;top:104px" width="64" height="64" viewBox="1070 104 64 64"><defs><filter id="bl"><feGaussianBlur stdDeviation="0.5"/></filter></defs><g filter="url(#bl)"><path d="M1101.7 109.6 L1127.8 118.5 L1101.7 128.5 L1075.6 118.5Z" fill="#c4c4c4"/><path d="M1075.6 118.5 L1101.7 128.5 L1101.7 163 L1078.5 149.3Z" fill="#b6b6b6"/><path d="M1101.7 128.5 L1127.8 118.5 L1125.4 149.3 L1101.7 163Z" fill="#b0b0b0"/><path d="M1075.6 118.5 L1101.7 128.5 L1127.8 118.5 M1101.7 128.5 L1101.7 163" stroke="#6a6a6a" stroke-width="1.4" fill="none"/></g><path d="M1096 115 L1107 118" stroke="#8a8a8a" stroke-width="1.5"/><path d="M1080 135 L1096 140" stroke="#7a7a7a" stroke-width="2.2" stroke-dasharray="1.2 0.8"/><path d="M1107 141 L1123 135" stroke="#7a7a7a" stroke-width="2.2" stroke-dasharray="1.2 0.8"/></svg>
<svg style="left:259.0px;top:618.0px" width="24" height="24" viewBox="0 0 24 24"><path d="M12 18 L12 4" stroke="#1fd21f" stroke-width="1.4"/><path d="M12 18 L21 19" stroke="#e02020" stroke-width="1.4"/><path d="M12 18 L5 20" stroke="#2020f0" stroke-width="1.4"/><path d="M10.5 1.5 L12 4 L13.5 1.5" stroke="#1fd21f" stroke-width="1" fill="none"/><path d="M20 16.5 L23 20 M23 16.5 L20 20" stroke="#e02020" stroke-width="1"/><path d="M2 17 L5 17 L2 21 L5 21" stroke="#2020f0" stroke-width="1" fill="none"/></svg>
<span class="t" style="left:683px;top:641px;color:#f0f0f0;font-size:9px;font-weight:bold;">persp</span>
<div style="left:1149px;top:54px;width:4px;height:607px;background:#393939;"></div>
<div style="left:1153px;top:54px;width:369px;height:606px;background:#444;"></div>
<div style="left:1153px;top:54px;width:1px;height:606px;background:#3a3a3a;"></div>
<div style="left:1520px;top:54px;width:2px;height:606px;background:#3a3a3a;"></div>
<span class="t" style="left:1162px;top:62px;color:#ccc;font-size:8.9px;">List</span>
<span class="t" style="left:1188px;top:62px;color:#ccc;font-size:8.8px;">Selected</span>
<span class="t" style="left:1234px;top:62px;color:#ccc;font-size:8.8px;">Focus</span>
<span class="t" style="left:1270px;top:62px;color:#ccc;font-size:9.7px;">Attributes</span>
<span class="t" style="left:1323px;top:62px;color:#ccc;font-size:9.1px;">Display</span>
<span class="t" style="left:1365px;top:62px;color:#ccc;font-size:9.3px;">Show</span>
<span class="t" style="left:1400px;top:62px;color:#ccc;font-size:9.1px;">Help</span>
<svg style="left:1505.0px;top:60.5px" width="12" height="13" viewBox="0 0 12 13"><path d="M6 1 L11 6 L9 7 L7 10 L4 7 L7 5Z" fill="#bbb"/><path d="M5 8 L1 12" stroke="#bbb" stroke-width="1.3"/></svg>
<span class="t" style="left:1153px;top:350px;width:372px;text-align:center;color:#d4d4d4;font-size:9.4px;-webkit-text-stroke:0.25px #d4d4d4;">Select an object in the scene to view and edit its attributes</span>
<div style="left:1157px;top:637px;width:119px;height:21px;background:#4a4a4a;"></div>
<div style="left:1278px;top:637px;width:123px;height:21px;background:#5d5d5d;"></div>
<div style="left:1403px;top:637px;width:117px;height:21px;background:#4a4a4a;"></div>
<span class="t" style="left:1157px;top:642px;width:119px;text-align:center;color:#777;font-size:9.5px;">Select</span>
<span class="t" style="left:1278px;top:642px;width:123px;text-align:center;color:#eee;font-size:9.5px;">Load Attributes</span>
<span class="t" style="left:1403px;top:642px;width:117px;text-align:center;color:#777;font-size:9.5px;">Copy Tab</span>
<div style="left:1522px;top:54px;width:3px;height:607px;background:#414141;"></div>
<div style="left:1525px;top:54px;width:8px;height:607px;background:#3d3d3d;"></div>
<div style="left:1525px;top:63px;width:8px;height:118px;background:#353535;"></div>
<div style="left:1525px;top:264px;width:8px;height:81px;background:#353535;"></div>
<span class="t" style="left:1471.5px;top:116.0px;width:118px;text-align:center;color:#a5a5a5;font-size:9.8px;letter-spacing:0px;transform:rotate(90deg);">Channel Box / Layer Editor</span>
<span class="t" style="left:1496.0px;top:215.5px;width:69px;text-align:center;color:#a5a5a5;font-size:9.8px;letter-spacing:0.2px;transform:rotate(90deg);">Attribute Editor</span>
<span class="t" style="left:1490.0px;top:298.5px;width:81px;text-align:center;color:#a5a5a5;font-size:9.8px;letter-spacing:0.5px;transform:rotate(90deg);">Modeling Toolkit</span>
<div style="left:0px;top:660px;width:1533px;height:73px;background:#444;"></div>
<div style="left:1px;top:662px;width:6px;height:38px;background:repeating-linear-gradient(90deg,#505050 0 1px,#3e3e3e 1px 2px);"></div>
<div style="left:10px;top:662px;width:1292px;height:7px;background:#4a4a4a;"></div>
<div style="left:10px;top:669px;width:1292px;height:25px;background:#2b2b2b;"></div>
<div style="left:10px;top:694px;width:1292px;height:7px;background:#4a4a4a;"></div>
<div style="left:16.5px;top:662px;width:40.5px;height:7px;background:#5a5a5a;"></div>
<div style="left:16.5px;top:669px;width:40.5px;height:25px;background:#3e3e3e;"></div>
<div style="left:16.5px;top:694px;width:40.5px;height:7px;background:#5a5a5a;"></div>
<div style="left:15.5px;top:662px;width:1px;height:7px;background:#2f2f2f;"></div>
<div style="left:15.5px;top:694px;width:1px;height:8px;background:#2f2f2f;"></div>
<div style="left:16px;top:681.5px;width:1px;height:12.5px;background:#9a9a9a;"></div>
<span class="t" style="left:21px;top:669px;color:#aaa;font-size:9.5px;">0</span>
<div style="left:57.5px;top:662px;width:1px;height:7px;background:#2f2f2f;"></div>
<div style="left:57.5px;top:694px;width:1px;height:8px;background:#2f2f2f;"></div>
<div style="left:58px;top:681.5px;width:1px;height:12.5px;background:#9a9a9a;"></div>
<span class="t" style="left:63px;top:669px;color:#aaa;font-size:9.5px;">1</span>
<div style="left:98.5px;top:662px;width:1px;height:7px;background:#2f2f2f;"></div>
<div style="left:98.5px;top:694px;width:1px;height:8px;background:#2f2f2f;"></div>
<div style="left:99px;top:681.5px;width:1px;height:12.5px;background:#9a9a9a;"></div>
<span class="t" style="left:104px;top:669px;color:#aaa;font-size:9.5px;">2</span>
<div style="left:139.5px;top:662px;width:1px;height:7px;background:#2f2f2f;"></div>
<div style="left:139.5px;top:694px;width:1px;height:8px;background:#2f2f2f;"></div>
<div style="left:140px;top:681.5px;width:1px;height:12.5px;background:#9a9a9a;"></div>
<span class="t" style="left:145px;top:669px;color:#aaa;font-size:9.5px;">3</span>
<div style="left:181.5px;top:662px;width:1px;height:7px;background:#2f2f2f;"></div>
<div style="left:181.5px;top:694px;width:1px;height:8px;background:#2f2f2f;"></div>
<div style="left:182px;top:681.5px;width:1px;height:12.5px;background:#9a9a9a;"></div>
<span class="t" style="left:187px;top:669px;color:#aaa;font-size:9.5px;">4</span>
<div style="left:222.5px;top:662px;width:1px;height:7px;background:#2f2f2f;"></div>
<div style="left:222.5px;top:694px;width:1px;height:8px;background:#2f2f2f;"></div>
<div style="left:223px;top:681.5px;width:1px;height:12.5px;background:#9a9a9a;"></div>
<span class="t" style="left:228px;top:669px;color:#aaa;font-size:9.5px;">5</span>
<div style="left:263.5px;top:662px;width:1px;height:7px;background:#2f2f2f;"></div>
<div style="left:263.5px;top:694px;width:1px;height:8px;background:#2f2f2f;"></div>
<div style="left:264px;top:681.5px;width:1px;height:12.5px;background:#9a9a9a;"></div>
<span class="t" style="left:269px;top:669px;color:#aaa;font-size:9.5px;">6</span>
<div style="left:304.5px;top:662px;width:1px;height:7px;background:#2f2f2f;"></div>
<div style="left:304.5px;top:694px;width:1px;height:8px;background:#2f2f2f;"></div>
<div style="left:305px;top:681.5px;width:1px;height:12.5px;background:#9a9a9a;"></div>
<span class="t" style="left:310px;top:669px;color:#aaa;font-size:9.5px;">7</span>
<div style="left:346.5px;top:662px;width:1px;height:7px;background:#2f2f2f;"></div>
<div style="left:346.5px;top:694px;width:1px;height:8px;background:#2f2f2f;"></div>
<div style="left:347px;top:681.5px;width:1px;height:12.5px;background:#9a9a9a;"></div>
<span class="t" style="left:352px;top:669px;color:#aaa;font-size:9.5px;">8</span>
<div style="left:387.5px;top:662px;width:1px;height:7px;background:#2f2f2f;"></div>
<div style="left:387.5px;top:694px;width:1px;height:8px;background:#2f2f2f;"></div>
<div style="left:388px;top:681.5px;width:1px;height:12.5px;background:#9a9a9a;"></div>
<span class="t" style="left:393px;top:669px;color:#aaa;font-size:9.5px;">9</span>
<div style="left:428.5px;top:662px;width:1px;height:7px;background:#2f2f2f;"></div>
<div style="left:428.5px;top:694px;width:1px;height:8px;background:#2f2f2f;"></div>
<div style="left:429px;top:681.5px;width:1px;height:12.5px;background:#9a9a9a;"></div>
<span class="t" style="left:434px;top:669px;color:#aaa;font-size:9.5px;">10</span>
<div style="left:470.5px;top:662px;width:1px;height:7px;background:#2f2f2f;"></div>
<div style="left:470.5px;top:694px;width:1px;height:8px;background:#2f2f2f;"></div>
<div style="left:471px;top:681.5px;width:1px;height:12.5px;background:#9a9a9a;"></div>
<span class="t" style="left:476px;top:669px;color:#aaa;font-size:9.5px;">11</span>
<div style="left:511.5px;top:662px;width:1px;height:7px;background:#2f2f2f;"></div>
<div style="left:511.5px;top:694px;width:1px;height:8px;background:#2f2f2f;"></div>
<div style="left:512px;top:681.5px;width:1px;height:12.5px;background:#9a9a9a;"></div>
<span class="t" style="left:517px;top:669px;color:#aaa;font-size:9.5px;">12</span>
<div style="left:552.5px;top:662px;width:1px;height:7px;background:#2f2f2f;"></div>
<div style="left:552.5px;top:694px;width:1px;height:8px;background:#2f2f2f;"></div>
<div style="left:553px;top:681.5px;width:1px;height:12.5px;background:#9a9a9a;"></div>
<span class="t" style="left:558px;top:669px;color:#aaa;font-size:9.5px;">13</span>
<div style="left:594.5px;top:662px;width:1px;height:7px;background:#2f2f2f;"></div>
<div style="left:594.5px;top:694px;width:1px;height:8px;background:#2f2f2f;"></div>
<div style="left:595px;top:681.5px;width:1px;height:12.5px;background:#9a9a9a;"></div>
<span class="t" style="left:600px;top:669px;color:#aaa;font-size:9.5px;">14</span>
<div style="left:635.5px;top:662px;width:1px;height:7px;background:#2f2f2f;"></div>
<div style="left:635.5px;top:694px;width:1px;height:8px;background:#2f2f2f;"></div>
<div style="left:636px;top:681.5px;width:1px;height:12.5px;background:#9a9a9a;"></div>
<span class="t" style="left:641px;top:669px;color:#aaa;font-size:9.5px;">15</span>
<div style="left:676.5px;top:662px;width:1px;height:7px;background:#2f2f2f;"></div>
<div style="left:676.5px;top:694px;width:1px;height:8px;background:#2f2f2f;"></div>
<div style="left:677px;top:681.5px;width:1px;height:12.5px;background:#9a9a9a;"></div>
<span class="t" style="left:682px;top:669px;color:#aaa;font-size:9.5px;">16</span>
<div style="left:718.5px;top:662px;width:1px;height:7px;background:#2f2f2f;"></div>
<div style="left:718.5px;top:694px;width:1px;height:8px;background:#2f2f2f;"></div>
<div style="left:719px;top:681.5px;width:1px;height:12.5px;background:#9a9a9a;"></div>
<span class="t" style="left:724px;top:669px;color:#aaa;font-size:9.5px;">17</span>
<div style="left:759.5px;top:662px;width:1px;height:7px;background:#2f2f2f;"></div>
<div style="left:759.5px;top:694px;width:1px;height:8px;background:#2f2f2f;"></div>
<div style="left:760px;top:681.5px;width:1px;height:12.5px;background:#9a9a9a;"></div>
<span class="t" style="left:765px;top:669px;color:#aaa;font-size:9.5px;">18</span>
<div style="left:800.5px;top:662px;width:1px;height:7px;background:#2f2f2f;"></div>
<div style="left:800.5px;top:694px;width:1px;height:8px;background:#2f2f2f;"></div>
<div style="left:801px;top:681.5px;width:1px;height:12.5px;background:#9a9a9a;"></div>
<span class="t" style="left:806px;top:669px;color:#aaa;font-size:9.5px;">19</span>
<div style="left:841.5px;top:662px;width:1px;height:7px;background:#2f2f2f;"></div>
<div style="left:841.5px;top:694px;width:1px;height:8px;background:#2f2f2f;"></div>
<div style="left:842px;top:681.5px;width:1px;height:12.5px;background:#9a9a9a;"></div>
<span class="t" style="left:847px;top:669px;color:#aaa;font-size:9.5px;">20</span>
<div style="left:883.5px;top:662px;width:1px;height:7px;background:#2f2f2f;"></div>
<div style="left:883.5px;top:694px;width:1px;height:8px;background:#2f2f2f;"></div>
<div style="left:884px;top:681.5px;width:1px;height:12.5px;background:#9a9a9a;"></div>
<span class="t" style="left:889px;top:669px;color:#aaa;font-size:9.5px;">21</span>
<div style="left:924.5px;top:662px;width:1px;height:7px;background:#2f2f2f;"></div>
<div style="left:924.5px;top:694px;width:1px;height:8px;background:#2f2f2f;"></div>
<div style="left:925px;top:681.5px;width:1px;height:12.5px;background:#9a9a9a;"></div>
<span class="t" style="left:930px;top:669px;color:#aaa;font-size:9.5px;">22</span>
<div style="left:965.5px;top:662px;width:1px;height:7px;background:#2f2f2f;"></div>
<div style="left:965.5px;top:694px;width:1px;height:8px;background:#2f2f2f;"></div>
<div style="left:966px;top:681.5px;width:1px;height:12.5px;background:#9a9a9a;"></div>
<span class="t" style="left:971px;top:669px;color:#aaa;font-size:9.5px;">23</span>
<div style="left:1007.5px;top:662px;width:1px;height:7px;background:#2f2f2f;"></div>
<div style="left:1007.5px;top:694px;width:1px;height:8px;background:#2f2f2f;"></div>
<div style="left:1008px;top:681.5px;width:1px;height:12.5px;background:#9a9a9a;"></div>
<span class="t" style="left:1013px;top:669px;color:#aaa;font-size:9.5px;">24</span>
<div style="left:1048.5px;top:662px;width:1px;height:7px;background:#2f2f2f;"></div>
<div style="left:1048.5px;top:694px;width:1px;height:8px;background:#2f2f2f;"></div>
<div style="left:1049px;top:681.5px;width:1px;height:12.5px;background:#9a9a9a;"></div>
<span class="t" style="left:1054px;top:669px;color:#aaa;font-size:9.5px;">25</span>
<div style="left:1089.5px;top:662px;width:1px;height:7px;background:#2f2f2f;"></div>
<div style="left:1089.5px;top:694px;width:1px;height:8px;background:#2f2f2f;"></div>
<div style="left:1090px;top:681.5px;width:1px;height:12.5px;background:#9a9a9a;"></div>
<span class="t" style="left:1095px;top:669px;color:#aaa;font-size:9.5px;">26</span>
<div style="left:1131.5px;top:662px;width:1px;height:7px;background:#2f2f2f;"></div>
<div style="left:1131.5px;top:694px;width:1px;height:8px;background:#2f2f2f;"></div>
<div style="left:1132px;top:681.5px;width:1px;height:12.5px;background:#9a9a9a;"></div>
<span class="t" style="left:1137px;top:669px;color:#aaa;font-size:9.5px;">27</span>
<div style="left:1172.5px;top:662px;width:1px;height:7px;background:#2f2f2f;"></div>
<div style="left:1172.5px;top:694px;width:1px;height:8px;background:#2f2f2f;"></div>
<div style="left:1173px;top:681.5px;width:1px;height:12.5px;background:#9a9a9a;"></div>
<span class="t" style="left:1178px;top:669px;color:#aaa;font-size:9.5px;">28</span>
<div style="left:1213.5px;top:662px;width:1px;height:7px;background:#2f2f2f;"></div>
<div style="left:1213.5px;top:694px;width:1px;height:8px;background:#2f2f2f;"></div>
<div style="left:1214px;top:681.5px;width:1px;height:12.5px;background:#9a9a9a;"></div>
<span class="t" style="left:1219px;top:669px;color:#aaa;font-size:9.5px;">29</span>
<div style="left:1255.5px;top:662px;width:1px;height:7px;background:#2f2f2f;"></div>
<div style="left:1255.5px;top:694px;width:1px;height:8px;background:#2f2f2f;"></div>
<div style="left:1256px;top:681.5px;width:1px;height:12.5px;background:#9a9a9a;"></div>
<span class="t" style="left:1261px;top:669px;color:#aaa;font-size:9.5px;">30</span>
<span class="t" style="left:21.5px;top:682.5px;color:#f0f0f0;font-size:10px;font-weight:bold;">0</span>
<div style="left:1311px;top:674px;width:40px;height:16px;background:#2b2b2b;"></div>
<span class="t" style="left:1315px;top:677px;color:#ccc;font-size:9.5px;">0</span>
<svg style="left:1358.0px;top:673.0px" width="16" height="16" viewBox="0 0 16 16"><rect x="1" y="3" width="1.8" height="10" fill="#c8c8c8"/><path d="M9 3 L3 8 L9 13Z M15 3 L9 8 L15 13Z" fill="#c8c8c8"/></svg>
<svg style="left:1380.0px;top:673.0px" width="16" height="16" viewBox="0 0 16 16"><rect x="3" y="3" width="1.8" height="10" fill="#c8c8c8"/><path d="M13 3 L5 8 L13 13Z" fill="#c8c8c8"/></svg>
<svg style="left:1401.0px;top:673.0px" width="16" height="16" viewBox="0 0 16 16"><rect x="3" y="2" width="2" height="12" fill="#e08030"/><path d="M14 3 L6 8 L14 13Z" fill="#c8c8c8"/></svg>
<svg style="left:1426.0px;top:673.0px" width="16" height="16" viewBox="0 0 16 16"><path d="M12 2 L3 8 L12 14Z" fill="#c8c8c8"/></svg>
<svg style="left:1448.0px;top:673.0px" width="16" height="16" viewBox="0 0 16 16"><path d="M4 2 L13 8 L4 14Z" fill="#c8c8c8"/></svg>
<svg style="left:1470.0px;top:673.0px" width="16" height="16" viewBox="0 0 16 16"><path d="M2 3 L10 8 L2 13Z" fill="#c8c8c8"/><rect x="11" y="2" width="2" height="12" fill="#e08030"/></svg>
<svg style="left:1493.0px;top:673.0px" width="16" height="16" viewBox="0 0 16 16"><path d="M3 3 L11 8 L3 13Z" fill="#c8c8c8"/><rect x="12" y="3" width="1.8" height="10" fill="#c8c8c8"/></svg>
<svg style="left:1515.0px;top:673.0px" width="16" height="16" viewBox="0 0 16 16"><path d="M1 3 L7 8 L1 13Z M7 3 L13 8 L7 13Z" fill="#c8c8c8"/><rect x="13.5" y="3" width="1.8" height="10" fill="#c8c8c8"/></svg>
<div style="left:0px;top:702px;width:1533px;height:1px;background:#3a3a3a;"></div>
<div style="left:1px;top:706px;width:6px;height:22px;background:repeating-linear-gradient(90deg,#505050 0 1px,#3e3e3e 1px 2px);"></div>
<div style="left:11px;top:709px;width:39px;height:16px;background:#2b2b2b;"></div>
<span class="t" style="left:15px;top:712.5px;color:#ccc;font-size:9.5px;">0</span>
<div style="left:58px;top:709px;width:874px;height:16px;background:#3a3a3a;border-radius:2px;"></div>
<div style="left:59px;top:710px;width:872px;height:1px;background:#333;"></div>
<div style="left:59px;top:710px;width:7px;height:14px;background:#aaa;"></div>
<span class="t" style="left:73px;top:712.5px;color:#ccc;font-size:9.5px;">0</span>
<span class="t" style="left:909px;top:712.5px;color:#ddd;font-size:9.5px;">30</span>
<div style="left:924px;top:710px;width:8px;height:14px;background:#aaa;"></div>
<div style="left:492px;top:713px;width:4px;height:9px;background:repeating-linear-gradient(#888 0 1px,transparent 1px 2px);opacity:.6"></div>
<div style="left:940px;top:709px;width:40px;height:16px;background:#2b2b2b;"></div>
<span class="t" style="left:944px;top:712.5px;color:#ccc;font-size:9.5px;">30</span>
<div style="left:996px;top:709px;width:2px;height:13px;background:#999;"></div>
<svg style="left:1014.0px;top:709.0px" width="16" height="16" viewBox="0 0 16 16"><path d="M4 3 L12 3 L12 15 L8 11 L4 15Z" fill="#e8702a"/><path d="M11 1 L11 7 M8 4 L14 4" stroke="#eee" stroke-width="1.5"/></svg>
<div style="left:1047px;top:709px;width:2px;height:13px;background:#999;"></div>
<svg style="left:1068px;top:714px" width="8" height="5" viewBox="0 0 8 5"><path d="M0 0 L8 0 L4 5Z" fill="#999"/></svg>
<div style="left:1081px;top:709px;width:83px;height:16px;background:#3e3e3e;"></div>
<span class="t" style="left:1086px;top:712.5px;color:#ccc;font-size:8.9px;">No Character Set</span>
<svg style="left:1174px;top:714px" width="8" height="5" viewBox="0 0 8 5"><path d="M0 0 L8 0 L4 5Z" fill="#999"/></svg>
<div style="left:1187px;top:709px;width:81px;height:16px;background:#3e3e3e;"></div>
<span class="t" style="left:1192px;top:712.5px;color:#ccc;font-size:9px;">No Anim Layer</span>
<div style="left:1286px;top:709px;width:2px;height:13px;background:#999;"></div>
<div style="left:1306px;top:709px;width:76px;height:16px;background:#555;"></div>
<div style="left:1366px;top:709px;width:16px;height:16px;background:#5a5a5a;"></div>
<span class="t" style="left:1309px;top:712.5px;color:#bbb;font-size:9.5px;">24 fps</span>
<svg style="left:1369px;top:714px" width="10" height="6" viewBox="0 0 10 6"><path d="M0 0 L10 0 L5 6Z" fill="#ddd"/></svg>
<svg style="left:1393.0px;top:708.0px" width="16" height="16" viewBox="0 0 16 16"><path d="M3 8 Q3 4 8 4 L13 4 M11 2 L13 4 L11 6 M13 8 Q13 12 8 12 L3 12 M5 10 L3 12 L5 14" stroke="#ddd" stroke-width="1.6" fill="none"/></svg>
<div style="left:1417px;top:707px;width:18px;height:18px;background:#4a90c8;"></div>
<svg style="left:1418.0px;top:708.0px" width="16" height="16" viewBox="0 0 16 16"><rect x="2" y="4" width="12" height="9" fill="#e0802a"/><path d="M3 7 L13 7 M3 10 L13 10" stroke="#444" stroke-width="1"/><path d="M10 2 L15 5 L10 8Z" fill="#eee"/></svg>
<div style="left:1451px;top:709px;width:2px;height:13px;background:#999;"></div>
<svg style="left:1469.0px;top:708.0px" width="16" height="16" viewBox="0 0 16 16"><path d="M2 6 L5 6 L9 3 L9 13 L5 10 L2 10Z" fill="#ddd"/><path d="M11 5 Q13 8 11 11 M13 3 Q16 8 13 13" stroke="#ddd" stroke-width="1.2" fill="none"/></svg>
<svg style="left:1493.0px;top:708.0px" width="16" height="16" viewBox="0 0 16 16"><circle cx="8" cy="8" r="5.5" fill="none" stroke="#bbb" stroke-width="1.2" stroke-dasharray="3 2"/><circle cx="13" cy="11" r="1.5" fill="#ddd"/></svg>
<svg style="left:1515.0px;top:708.0px" width="16" height="16" viewBox="0 0 16 16"><circle cx="5" cy="5" r="3" fill="none" stroke="#bbb" stroke-width="1.5"/><path d="M9 9 L12 7 L14 9 M10 9 L8 14 L5 13 M10 11 L13 14" stroke="#e8802a" stroke-width="2" fill="none"/><circle cx="12" cy="6" r="1.5" fill="#e8802a"/></svg>
<div style="left:0px;top:731px;width:1533px;height:2px;background:#383838;"></div>
<div style="left:0px;top:733px;width:1533px;height:24px;background:#444;"></div>
<div style="left:1px;top:736px;width:5px;height:20px;background:repeating-linear-gradient(90deg,#505050 0 1px,#3e3e3e 1px 2px);"></div>
<svg style="left:9.0px;top:741.0px" width="14" height="14" viewBox="0 0 14 14"><circle cx="7" cy="7" r="6.5" fill="#7cc23a"/><text x="7" y="11" text-anchor="middle" font-family="Liberation Sans" font-weight="bold" font-size="10" fill="#333">?</text></svg>
<span class="t" style="left:29px;top:742px;color:#ddd;font-size:7.8px;">Select Tool: select an object</span>
<div style="left:802px;top:735px;width:1.5px;height:22px;background:#2e2e2e;"></div>
<div style="left:806px;top:736px;width:1px;height:20px;background:#5a5a5a;"></div>
<div style="left:808px;top:736px;width:1px;height:20px;background:#5a5a5a;"></div>
<span class="t" style="left:816px;top:741.5px;color:#ddd;font-size:10.3px;">MEL</span>
<div style="left:840px;top:740px;width:260px;height:16px;background:#2b2b2b;"></div>
<div style="left:1103px;top:740px;width:405px;height:16px;background:#2b2b2b;"></div>
<span class="t" style="left:1108px;top:743px;color:#ccc;font-size:9px;">Preferences saved. See Script Editor for details.</span>
<svg style="left:1515.0px;top:740.0px" width="16" height="16" viewBox="0 0 16 16"><rect x="1" y="1" width="14" height="2" fill="#bbb"/><rect x="1" y="4" width="14" height="11" fill="#ccc"/><text x="8" y="13" text-anchor="middle" font-family="Liberation Mono" font-weight="bold" font-size="9" fill="#333">{;}</text></svg>
</div><svg style="position:absolute;left:1300px;top:550px" width="236" height="208" viewBox="1300 550 236 208"><g stroke="#ff0000" stroke-width="6.5" stroke-linecap="round" stroke-linejoin="round" fill="none"><path d="M1315 563.5 Q1320 565 1346 562 L1344 590 L1315 590.5"/><path d="M1371 563.5 Q1376 565 1402 562 L1400 590 L1371 590.5"/></g><path d="M1410 611 Q1422 614 1440 635 L1470 668" stroke="#ff0000" stroke-width="5" stroke-linecap="round" fill="none"/><path d="M1452 673 L1489 634 L1486 684Z" fill="#ff0000" stroke="#ff0000" stroke-width="3" stroke-linejoin="round"/><rect x="1499.8" y="701.8" width="33.4" height="29.4" fill="none" stroke="#ff0000" stroke-width="3.6"/></svg>
</body></html>
